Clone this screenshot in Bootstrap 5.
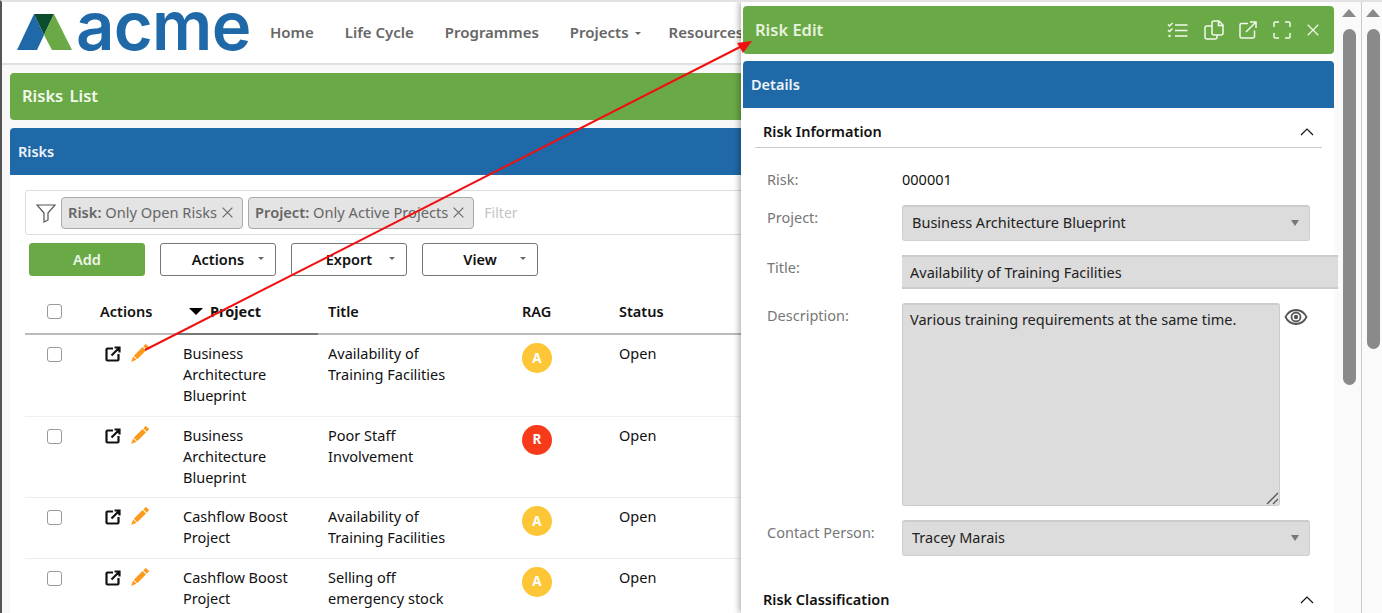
<!DOCTYPE html>
<html lang="en">
<head>
<meta charset="UTF-8">
<title>Risks List</title>
<link href="https://cdn.jsdelivr.net/npm/bootstrap@5.3.0/dist/css/bootstrap.min.css" rel="stylesheet">
<style>
html,body{height:613px;overflow:hidden}
body{font-family:"Noto Sans","Open Sans",sans-serif;font-size:14px;color:#111;background:#f8f8f8;border-left:2px solid #555;border-top:2px solid #e2e2e2;position:relative}
.app-shell{height:611px}
.page-area{position:relative;overflow:hidden;min-width:0}
.top-nav{height:63px;background:#fff;border-bottom:2px solid #dde0e4;padding:0 0 0 15px;flex-wrap:nowrap}
.brand-mark{font-family:Inter,sans-serif;font-weight:600;font-size:67px;line-height:46px;color:#1f69a8;letter-spacing:-.7px;margin:0 0 13px 4px}
.brand-wrap{width:253px;height:60px}
.top-nav .nav-link{color:#666;font-weight:600;font-size:15px;padding:0;margin-right:31px;white-space:nowrap}
.top-nav .nav-menu{margin-right:28px}
.dropdown-toggle::after{vertical-align:.2em;border-top-width:.24em;border-left-width:.24em;border-right-width:.24em;margin-left:.4em}
.bar-green{background:#69aa46;color:#f3f8ee;font-weight:600;border-radius:4px 4px 0 0}
.bar-blue{background:#1f69a8;color:#eef3f9;font-weight:600;border-radius:4px 4px 0 0}
.list-title{height:47px;margin:8px 0 8px 8px;width:1400px;font-size:16.5px;padding-left:12px;word-spacing:2px;border-radius:4px}
.list-head{height:47px;margin-left:8px;width:1400px;padding-left:8px;font-size:14.5px}
.list-body{margin-left:8px;width:1400px;background:#fff;padding:15px 0 0 15px;height:600px}
.filter-box{height:45px;width:1300px;border:1px solid #ddd;border-radius:3px;padding:0 10px;gap:5px}
.filter-chip{height:32px;background:#e4e4e4;border:1px solid #aaa;border-radius:4px;padding:0 8px 0 6px;color:#666;font-size:14.65px;white-space:nowrap}
.filter-chip b{font-weight:600}
.chip-next{margin-left:0}
.filter-hint{color:#c4c4c4;margin-left:5px}
.tool-row{gap:15px}
.tool-btn{width:116px;height:33px;padding:0;background:#fff;border:1px solid #777;border-radius:3px;color:#111;font-weight:600;font-size:14.5px;--bs-btn-hover-bg:#fff}
.tool-btn.dropdown-toggle{position:relative}
.tool-btn.dropdown-toggle::after{position:absolute;right:11px;top:13px;color:#666;margin:0}
.add-btn{background:#69aa46;border-color:#69aa46;color:#eef5e8;border-radius:3px}
.risk-table{table-layout:fixed;width:780px;margin:14px 0 0;font-size:14.5px;line-height:21px;--bs-table-bg:transparent;color:#111}
.col-pick{width:68px}
.col-acts{width:83px}
.col-proj{width:142px}
.col-title{width:197px}
.col-rag{width:97px}
.risk-table th{font-weight:600;height:44px;padding:0 0 0 7px;vertical-align:middle;border-bottom:2px solid #bbb}
.risk-table th.sorted{border-bottom-color:#777;font-weight:700;padding-left:13px}
.risk-table td{padding:8px 7px 9.5px;border-bottom:1px solid #eee;vertical-align:top}
.risk-table th.title-cell,.risk-table td.title-cell{padding-left:10px}
.risk-table .form-check-input{width:15px;height:15px;margin:0;border:1.5px solid #999;border-radius:3px;display:block}
.risk-table td.pick,.risk-table th.pick{padding-left:22px}
.risk-table td.pick{padding-top:12px}
.act-icons{padding:3px 0 0 5px;gap:10px}
.pen-icon{color:#fb9a1c;margin-top:-2px}
.sort-mark{display:inline-block;border:7px solid transparent;border-top-color:#000;border-bottom:0;vertical-align:.15em;margin-right:7px}
.rag-dot{width:30px;height:30px;border-radius:50%;color:#fff;font-weight:700;font-size:13.5px}
.rag-a{background:#fdc636}
.rag-r{background:#f63a1a}
.edit-panel{position:absolute;top:0;right:0;bottom:0;width:620px;background:#fff;box-shadow:-2px 0 6px rgba(0,0,0,.3);padding-left:2px}
.panel-col{width:591px;flex:none}
.panel-gutter{width:6px;background:#fafafa;flex:none}
.edit-head{height:48px;margin-top:4px;padding:0 14px 0 12px;font-size:16.5px;border-radius:4px;color:#e8f1df}
.edit-icons{gap:15.5px;color:#f3f8ee}
.details-bar{height:47px;margin-top:7px;padding-left:8px;font-size:14.5px;border-radius:4px 4px 0 0}
.sect-head{margin:0 12px;height:40px;border-bottom:1px solid #ccc;padding:8px 8px 0;font-weight:600;font-size:14.5px;color:#111}
.sect-plain{border-bottom:0;margin-top:20px}
.field-row{padding-left:24px;margin-bottom:14px;font-size:14.5px}
.field-first{margin-top:21px}
.field-label{width:135px;flex:none;color:#777}
.field-cap{padding-top:2px}
.panel-input{background:#dcdcdc;border:0;border-top:2px solid #ccc;border-bottom:2px solid #ccc;border-radius:0;height:34px;padding:0 8px;font-size:14.5px;color:#222}
.title-input{width:436px;flex:none;position:relative;z-index:1}
.panel-select,.panel-select:disabled{background-color:#dcdcdc;border:1px solid #d0d0d0;border-top:2px solid #ccc;border-radius:3px;height:36px;width:408px;padding:0 9px;font-size:14.5px;color:#222;opacity:1;appearance:none;background-image:url("data:image/svg+xml,%3Csvg xmlns='http://www.w3.org/2000/svg' width='8' height='8'%3E%3Cpath d='M0 1h8L4 7z' fill='%23777'/%3E%3C/svg%3E");background-repeat:no-repeat;background-position:right 10px center;background-size:8px 8px}
.panel-area{background:#dcdcdc;border:1px solid #ccc;border-top:2px solid #ccc;border-radius:3px;height:203px;width:378px;padding:4px 7px;font-size:14.5px;color:#222;resize:vertical}
.panel-area::-webkit-resizer{background:url("data:image/svg+xml,%3Csvg xmlns='http://www.w3.org/2000/svg' width='15' height='15'%3E%3Cpath d='M3 14 14 3M9 14l5-5' stroke='%23555' stroke-width='1.300' fill='none'/%3E%3C/svg%3E") no-repeat}
.panel-input:focus,.panel-area:focus{background:#dcdcdc;box-shadow:none;border-color:#ccc}
.eye-icon{margin-top:2px}
.fake-scroll{width:21px;flex:none;position:relative;background:#fafafa}
.side-scroll{border-left:1px solid #ccc}
.scroll-up{position:absolute;top:7px;left:2px;border:7px solid transparent;border-top:0;border-bottom:8px solid #8a8a8a}
.scroll-thumb{position:absolute;top:27px;left:3px;width:13px;background:#8a8a8a;border-radius:7px}
.side-scroll .scroll-up{left:4px}
.side-scroll .scroll-thumb{left:5px}
.thumb-long{height:356px}
.thumb-short{height:320px}
.note-arrow{position:absolute;left:-2px;top:-2px;pointer-events:none;z-index:20}
</style>
</head>
<body>
<svg width="0" height="0" class="d-block">
  <symbol id="ic-open" viewBox="0 0 16 16"><path d="M8 2.500H2.500a1 1 0 0 0-1 1v10a1 1 0 0 0 1 1h10a1 1 0 0 0 1-1V8M6.500 9.500 14.500 1.500M9.500 1.500h5v5" fill="none" stroke="currentColor" stroke-width="2.200"/></symbol>
  <symbol id="ic-open-thin" viewBox="0 0 18 18"><path d="M9 2.500H2.500a1.500 1.500 0 0 0-1.500 1.500v11.500a1.500 1.500 0 0 0 1.500 1.500H14a1.500 1.500 0 0 0 1.500-1.500V9.500M7 11 17 1M11 1h6v6" fill="none" stroke="currentColor" stroke-width="1.500"/></symbol>
  <symbol id="ic-pen" viewBox="0 0 16 16"><path d="M12.850.150a.500.500 0 0 1 .700 0l2.300 2.300a.500.500 0 0 1 0 .700L14 5 11 2zM10.300 2.700l3 3L5.500 13.500l-3-3zM1.900 11.100l3 3-4.200 1.600a.300.300 0 0 1-.400-.400z" fill="currentColor"/></symbol>
  <symbol id="ic-list" viewBox="0 0 21 16"><path d="M1 2.500l1.500 1.500L5.500 1M1 8l1.500 1.500L5.500 6.500M8 3h12.500M8 8.500h12.500M8 14h12.500" fill="none" stroke="currentColor" stroke-width="1.500"/><circle cx="2.500" cy="14" r="1.200" fill="currentColor"/></symbol>
  <symbol id="ic-copy" viewBox="0 0 20 20"><path d="M8 6H3a2 2 0 0 0-2 2v9a2 2 0 0 0 2 2h8a2 2 0 0 0 2-2v-2M8 3a2 2 0 0 1 2-2h5l4 4v8a2 2 0 0 1-2 2h-7a2 2 0 0 1-2-2zM14.500 1v4.500H19" fill="none" stroke="currentColor" stroke-width="1.500"/></symbol>
  <symbol id="ic-full" viewBox="0 0 18 18"><path d="M1 6V2a1 1 0 0 1 1-1h4M12 1h4a1 1 0 0 1 1 1v4M17 12v4a1 1 0 0 1-1 1h-4M6 17H2a1 1 0 0 1-1-1v-4" fill="none" stroke="currentColor" stroke-width="1.500"/></symbol>
  <symbol id="ic-close" viewBox="0 0 16 16"><path d="M2 2l12 12M14 2 2 14" fill="none" stroke="currentColor" stroke-width="1.400"/></symbol>
  <symbol id="ic-up" viewBox="0 0 14 8"><path d="M1 7l6-6 6 6" fill="none" stroke="currentColor" stroke-width="1.200"/></symbol>
</svg>

<div class="app-shell d-flex">
  <div class="page-area flex-grow-1">
    <nav class="navbar top-nav">
      <div class="brand-wrap d-flex align-items-center">
        <svg width="55" height="37" viewBox="0 0 55 37">
          <path d="M17 0 0 36h20l7-15z" fill="#1f69a8"/>
          <path d="M17 0h20L27 21z" fill="#0c4d2d"/>
          <path d="M37 0l18 36H35l-8-15z" fill="#69aa46"/>
        </svg>
        <span class="brand-mark">acme</span>
      </div>
      <ul class="navbar-nav flex-row flex-grow-1 align-items-center">
        <li class="nav-item"><a class="nav-link" href="#">Home</a></li>
        <li class="nav-item"><a class="nav-link" href="#">Life Cycle</a></li>
        <li class="nav-item"><a class="nav-link" href="#">Programmes</a></li>
        <li class="nav-item"><a class="nav-link nav-menu dropdown-toggle" href="#">Projects</a></li>
        <li class="nav-item"><a class="nav-link" href="#">Resources</a></li>
      </ul>
    </nav>

    <div class="bar-green list-title d-flex align-items-center">Risks List</div>
    <div class="bar-blue list-head d-flex align-items-center">Risks</div>
    <div class="list-body">
      <div class="filter-box d-flex align-items-center">
        <svg width="20" height="20" viewBox="0 0 20 20"><path d="M1 2h18l-7 8v7l-4 2v-9z" fill="none" stroke="#555" stroke-width="1.200"/></svg>
        <span class="filter-chip d-flex align-items-center gap-1"><span><b>Risk:</b> Only Open Risks</span><svg width="13" height="13"><use href="#ic-close"/></svg></span>
        <span class="filter-chip chip-next d-flex align-items-center gap-1"><span><b>Project:</b> Only Active Projects</span><svg width="13" height="13"><use href="#ic-close"/></svg></span>
        <span class="filter-hint">Filter</span>
      </div>
      <div class="d-flex mt-2 ms-1 tool-row">
        <button class="btn tool-btn add-btn">Add</button>
        <button class="btn tool-btn dropdown-toggle">Actions</button>
        <button class="btn tool-btn dropdown-toggle">Export</button>
        <button class="btn tool-btn dropdown-toggle">View</button>
      </div>
      <table class="table risk-table" id="riskTable">
        <colgroup><col class="col-pick"><col class="col-acts"><col class="col-proj"><col class="col-title"><col class="col-rag"><col></colgroup>
        <thead>
          <tr>
            <th class="pick"><input class="form-check-input" type="checkbox"></th>
            <th>Actions</th>
            <th class="sorted"><span class="sort-mark"></span>Project</th>
            <th class="title-cell">Title</th>
            <th>RAG</th>
            <th>Status</th>
          </tr>
        </thead>
        <tbody id="riskRows"></tbody>
      </table>
    </div>

    <div class="edit-panel d-flex">
      <div class="panel-col">
        <div class="bar-green edit-head d-flex align-items-center justify-content-between">
          <span>Risk Edit</span>
          <div class="edit-icons d-flex align-items-center">
            <svg width="21" height="16"><use href="#ic-list"/></svg>
            <svg width="20" height="20"><use href="#ic-copy"/></svg>
            <svg width="18" height="18"><use href="#ic-open-thin"/></svg>
            <svg width="18" height="18"><use href="#ic-full"/></svg>
            <svg width="14" height="14"><use href="#ic-close"/></svg>
          </div>
        </div>
        <div class="bar-blue details-bar d-flex align-items-center">Details</div>
        <div class="sect-head d-flex align-items-center justify-content-between">
          <span>Risk Information</span>
          <svg width="14" height="8"><use href="#ic-up"/></svg>
        </div>
        <div class="field-row field-first d-flex">
          <span class="field-label">Risk:</span><span>000001</span>
        </div>
        <div class="field-row d-flex">
          <span class="field-label field-cap">Project:</span>
          <select class="form-select panel-select" disabled><option>Business Architecture Blueprint</option></select>
        </div>
        <div class="field-row d-flex">
          <span class="field-label field-cap">Title:</span>
          <input class="form-control panel-input title-input" value="Availability of Training Facilities" readonly>
        </div>
        <div class="field-row d-flex">
          <span class="field-label field-cap">Description:</span>
          <textarea class="form-control panel-area" readonly>Various training requirements at the same time.</textarea>
          <svg width="24" height="24" viewBox="0 0 24 24" class="ms-1 eye-icon"><path d="M1.500 12C4 7 8 5 12 5s8 2 10.500 7C20 17 16 19 12 19s-8-2-10.500-7z" fill="none" stroke="#555" stroke-width="1.800"/><circle cx="12" cy="12" r="4.500" fill="none" stroke="#555" stroke-width="1.800"/><circle cx="12" cy="12" r="2.200" fill="#555"/></svg>
        </div>
        <div class="field-row d-flex">
          <span class="field-label field-cap">Contact Person:</span>
          <select class="form-select panel-select" disabled><option>Tracey Marais</option></select>
        </div>
        <div class="sect-head sect-plain d-flex align-items-center justify-content-between">
          <span>Risk Classification</span>
          <svg width="14" height="8"><use href="#ic-up"/></svg>
        </div>
      </div>
      <div class="panel-gutter"></div>
      <div class="fake-scroll"><span class="scroll-up"></span><span class="scroll-thumb thumb-long"></span></div>
    </div>
  </div>
  <div class="fake-scroll side-scroll"><span class="scroll-up"></span><span class="scroll-thumb thumb-short"></span></div>
</div>

<svg class="note-arrow" width="1382" height="613">
  <line x1="145" y1="350" x2="742" y2="46" stroke="#f01010" stroke-width="2"/>
  <polygon points="752,41 737,43 743,53" fill="#f01010"/>
</svg>

<script>
const risks = [
  { project: "Business<br>Architecture<br>Blueprint", title: "Availability of<br>Training Facilities", rag: "A" },
  { project: "Business<br>Architecture<br>Blueprint", title: "Poor Staff<br>Involvement", rag: "R" },
  { project: "Cashflow Boost<br>Project", title: "Availability of<br>Training Facilities", rag: "A" },
  { project: "Cashflow Boost<br>Project", title: "Selling off<br>emergency stock", rag: "A" }
];

document.getElementById("riskRows").innerHTML = risks.map(r => `<tr>
  <td class="pick"><input class="form-check-input" type="checkbox"></td>
  <td><div class="act-icons d-flex">
    <svg width="16" height="16"><use href="#ic-open"/></svg>
    <svg width="18" height="18" class="pen-icon"><use href="#ic-pen"/></svg>
  </div></td>
  <td>${r.project}</td>
  <td class="title-cell">${r.title}</td>
  <td><span class="rag-dot d-flex align-items-center justify-content-center rag-${r.rag.toLowerCase()}">${r.rag}</span></td>
  <td>Open</td>
</tr>`).join("");
</script>
<script src="https://cdn.jsdelivr.net/npm/bootstrap@5.3.0/dist/js/bootstrap.bundle.min.js"></script>
</body>
</html>
